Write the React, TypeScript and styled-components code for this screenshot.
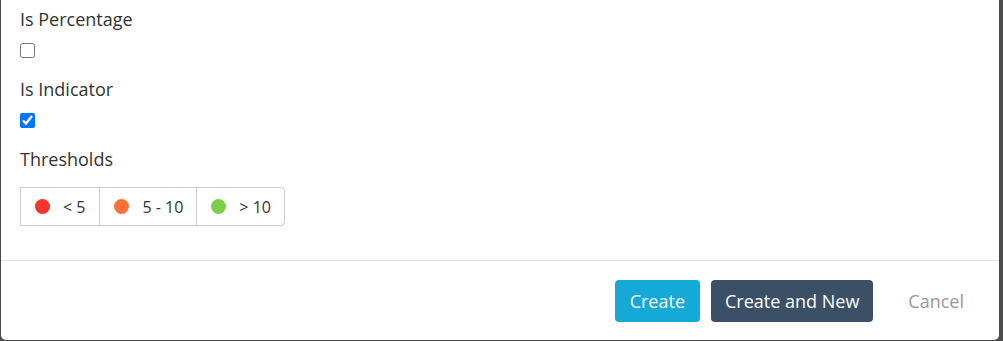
import styled, { createGlobalStyle } from 'styled-components'

const GlobalStyle = createGlobalStyle`
	html, body {
		margin: 0;
		padding: 0;
		background: #4d4d4d;
		font-family: 'Open Sans', 'Noto Sans', sans-serif;
		color: #333;
	}
`

const thresholds = [
	{ color: '#f5352a', label: '< 5' },
	{ color: '#fd7139', label: '5 - 10' },
	{ color: '#7dcf47', label: '> 10' }
]

export default function App() {
	return (
		<>
			<GlobalStyle />
			<Modal>
				<Body>
					<Field>
						<Label>Is Percentage</Label>
						<Check type="checkbox" />
					</Field>
					<Field>
						<Label>Is Indicator</Label>
						<Check type="checkbox" defaultChecked />
					</Field>
					<Field>
						<Label>Thresholds</Label>
						<ThresholdGroup>
							{thresholds.map(t => (
								<ThresholdCell key={t.label}>
									<Dot color={t.color} />
									<span>{t.label}</span>
								</ThresholdCell>
							))}
						</ThresholdGroup>
					</Field>
				</Body>
				<Footer>
					<Button variant="primary">Create</Button>
					<Button variant="dark">Create and New</Button>
					<Button variant="link">Cancel</Button>
				</Footer>
			</Modal>
		</>
	)
}

const Modal = styled.div`
	width: 998px;
	height: 340px;
	margin-left: 1px;
	background: #fff;
	border-radius: 0 0 5px 5px;
	display: flex;
	flex-direction: column;
	box-sizing: border-box;
`

const Body = styled.div`
	padding: 6px 19px 0;
	flex: 1;
	display: flex;
	flex-direction: column;
	gap: 18px;
`

const Field = styled.div`
	display: flex;
	flex-direction: column;
	align-items: flex-start;
	gap: 10px;
`

const Label = styled.label`
	font-size: 18px;
	line-height: 27px;
	font-weight: 500;
	color: #333;
`

const Check = styled.input`
	width: 15px;
	height: 15px;
	margin: 0;
	accent-color: #0075ff;
`

const ThresholdGroup = styled.div`
	display: flex;
	border: 1px solid #ccc;
	border-radius: 0 4px 4px 0;
	margin-top: 4px;
`

const ThresholdCell = styled.div`
	display: flex;
	align-items: center;
	gap: 13px;
	height: 37px;
	padding: 0 14px;
	font-size: 16px;
	color: #333;
	& + & {
		border-left: 1px solid #ccc;
		padding: 0 13px 0 14px;
	}
`

const Dot = styled.span<{ color: string }>`
	width: 15px;
	height: 15px;
	border-radius: 50%;
	background: ${({ color }) => color};
`

const Footer = styled.div`
	display: flex;
	justify-content: flex-end;
	align-items: center;
	gap: 11px;
	border-top: 1px solid #e5e5e5;
	padding: 19px 20px 18px;
`

const Button = styled.button<{ variant: 'primary' | 'dark' | 'link' }>`
	height: 42px;
	padding: ${({ variant }) => (variant === 'dark' ? '0 14px' : '0 15px')};
	margin-left: ${({ variant }) => (variant === 'link' ? '9px' : '0')};
	border: none;
	border-radius: 4px;
	font-family: 'Open Sans', 'Noto Sans', sans-serif;
	font-size: 18px;
	cursor: pointer;
	background: ${({ variant }) =>
		variant === 'primary' ? '#15a9d8' : variant === 'dark' ? '#3b4f66' : 'transparent'};
	color: ${({ variant }) => (variant === 'link' ? '#999' : '#fff')};
`
